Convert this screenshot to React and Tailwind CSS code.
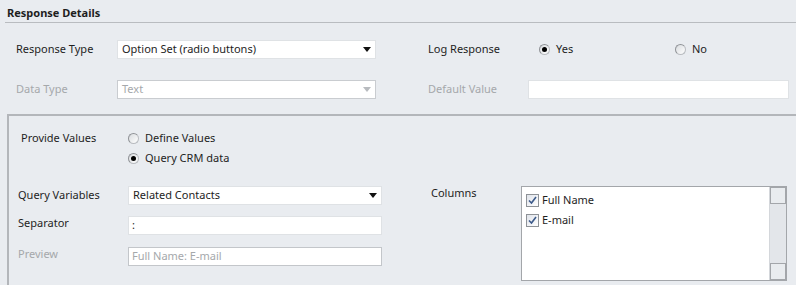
import React from 'react';

const Arrow = ({ muted }) => (
  <svg width="8" height="5" viewBox="0 0 8 5" className="shrink-0">
    <path d="M0 0 L8 0 L4 5 Z" fill={muted ? '#b8bbbf' : '#111'} />
  </svg>
);

const Select = ({ value, muted, className = '' }) => (
  <div
    className={`flex h-[19px] items-center justify-between bg-white pl-[4px] pr-[4px] border ${
      muted ? 'border-[#c9ccd0] text-[#a5a8ab]' : 'border-[#dfe2e5] text-[#1e1e1e]'
    } ${className}`}
  >
    <span>{value}</span>
    <Arrow muted={muted} />
  </div>
);

const Input = ({ value, muted, className = '' }) => (
  <div
    className={`flex h-[19px] items-center bg-white pl-[3px] border ${
      muted ? 'border-[#c3c6ca] text-[#a5a8ab]' : 'border-[#dfe2e5] text-[#1e1e1e]'
    } ${className}`}
  >
    {value}
  </div>
);

const Radio = ({ checked, label }) => (
  <div className="flex items-center h-[20px]">
    <span className="relative flex h-[11px] w-[11px] items-center justify-center rounded-full border border-[#b9bcc0] border-l-[#8f9296] border-t-[#8f9296] bg-gradient-to-br from-[#d9dcdf] to-white">
      {checked && <span className="h-[5px] w-[5px] rounded-full bg-black" />}
    </span>
    <span className="ml-[6px]">{label}</span>
  </div>
);

const Check = ({ label }) => (
  <div className="flex items-center h-[20px]">
    <span className="flex h-[13px] w-[13px] items-center justify-center border border-[#8e9297] bg-gradient-to-br from-[#dfe3ea] to-white">
      <svg width="9" height="9" viewBox="0 0 9 9">
        <path d="M1 4.5 L3.5 7 L8 1" fill="none" stroke="#3c5a8a" strokeWidth="1.6" />
      </svg>
    </span>
    <span className="ml-[3px]">{label}</span>
  </div>
);

export default function App() {
  return (
    <div className="w-[796px] h-[285px] overflow-hidden bg-[#e9ecf0] text-[11px] text-[#1e1e1e] font-['Segoe_UI','Noto_Sans','Open_Sans',sans-serif]">
      {/* header */}
      <div className="pl-[7px] pt-[4px] h-[22px] font-bold leading-[18px]">Response Details</div>
      <div className="ml-[5px] h-px bg-[#b9bcc0]" />

      {/* response rows */}
      <div className="mt-[17px] flex items-center h-[19px]">
        <div className="pl-[16px] w-[117px]">Response Type</div>
        <Select value="Option Set (radio buttons)" className="w-[259px]" />
        <div className="pl-[52px] w-[152px]">Log Response</div>
        <div className="flex w-[261px]">
          <div className="w-[147px] pl-[11px]">
            <Radio checked label="Yes" />
          </div>
          <Radio label="No" />
        </div>
      </div>
      <div className="mt-[21px] flex items-center h-[19px]">
        <div className="pl-[16px] w-[117px] text-[#a5a8ab]">Data Type</div>
        <Select value="Text" muted className="w-[259px]" />
        <div className="pl-[52px] w-[152px] text-[#a5a8ab]">Default Value</div>
        <Input value="" className="w-[261px] border-[#b9bcc0]" />
      </div>

      {/* values panel */}
      <div className="ml-[7px] mt-[15px] border-l-2 border-t-2 border-[#b3b6ba] h-[200px]">
        <div className="flex pt-[12px]">
          <div className="pl-[12px] w-[119px] leading-[20px]">Provide Values</div>
          <div className="flex flex-col">
            <Radio label="Define Values" />
            <Radio checked label="Query CRM data" />
          </div>
        </div>

        <div className="mt-[18px] flex">
          <div className="w-[422px]">
            <div className="flex items-center h-[19px]">
              <div className="pl-[9px] w-[119px]">Query Variables</div>
              <Select value="Related Contacts" className="w-[254px]" />
            </div>
            <div className="mt-[11px] flex items-start h-[19px]">
              <div className="pl-[9px] w-[119px] leading-[14px]">Separator</div>
              <Input value=":" className="w-[254px]" />
            </div>
            <div className="mt-[12px] flex items-start h-[19px]">
              <div className="pl-[9px] w-[119px] leading-[14px] text-[#a5a8ab]">Preview</div>
              <Input value="Full Name: E-mail" muted className="w-[254px] h-[18px]" />
            </div>
          </div>
          <div className="flex items-start">
            <div className="w-[90px] leading-[14px]">Columns</div>
            <div className="flex h-[95px] w-[266px] border border-[#a3a6aa] bg-white">
              <div className="flex-1 pl-[4px] pt-[3px]">
                <Check label="Full Name" />
                <Check label="E-mail" />
              </div>
              <div className="flex w-[17px] flex-col justify-between bg-[#e3e6ea] border-l border-[#d4d7db]">
                <div className="h-[17px] border border-[#a3a6aa] bg-[#e9ecef]" />
                <div className="h-[17px] border border-[#a3a6aa] bg-[#e9ecef]" />
              </div>
            </div>
          </div>
        </div>
      </div>
    </div>
  );
}
